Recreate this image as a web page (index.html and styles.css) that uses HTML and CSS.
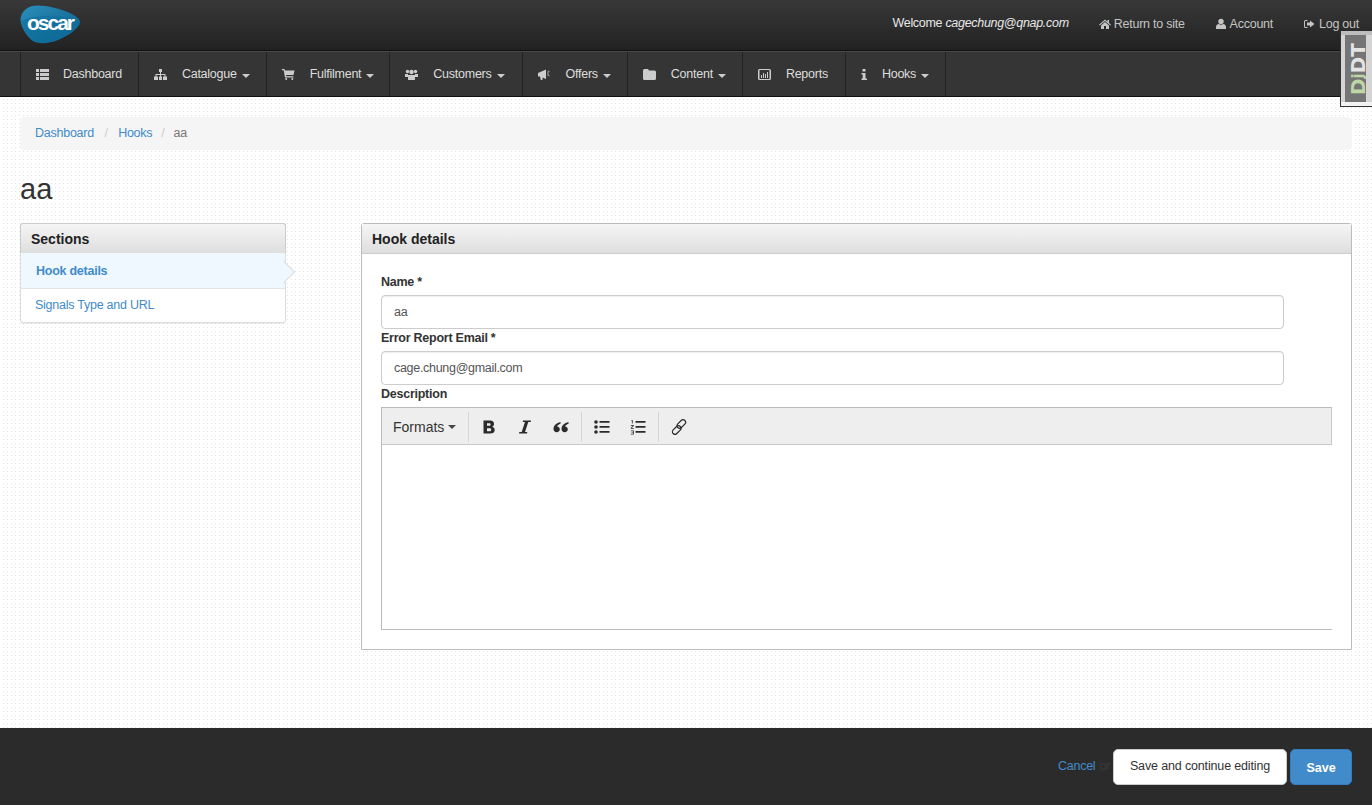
FILE: index.html
```html
<!DOCTYPE html>
<html lang="en">
<head>
<meta charset="utf-8">
<title>aa | Hooks</title>
<link rel="stylesheet" href="styles.css">
</head>
<body>
<header class="topbar">
  <a class="logo" href="#">
    <svg class="logo-shape" width="61" height="39" viewBox="0 0 61 39"><defs><linearGradient id="lg" x1="0" y1="0" x2="1" y2="1"><stop offset="0" stop-color="#2a8fbb"/><stop offset="1" stop-color="#0b5c86"/></linearGradient></defs><path d="M12 1C22-1 38 3 50 8c6 3 10 6 10 9 0 5-10 13-22 18-10 4-20 4-25 1C7 32 2 24 .5 16 0 9 5 3 12 1Z" fill="url(#lg)"/><path d="M1 16C18 9 42 9 60 17c0 5-10 13-22 18-10 4-20 4-25 1C7 32 3 24 1 16Z" fill="#0d6d9b" opacity=".55"/></svg>
    <span class="logo-text">oscar</span>
  </a>
  <div class="user-links">
    <span class="welcome">Welcome <em>cagechung@qnap.com</em></span>
    <a href="#"><svg class="ico-s" viewBox="0 0 12 12"><path d="M6 1.500 0 6.800l.7.8L6 3l5.300 4.600.7-.8-2-1.800V2H8.500v1.700ZM2 7.500V11h3V8h2v3h3V7.500L6 4Z"/></svg>Return to site</a>
    <a href="#"><svg class="ico-s" viewBox="0 0 12 12"><circle cx="6" cy="3.500" r="2.700"/><path d="M1 11V9c0-2 1.500-3 3-3l2 1 2-1c1.500 0 3 1 3 3v2Z"/></svg>Account</a>
    <a href="#"><svg class="ico-s" viewBox="0 0 12 12"><path d="M4.500 2H2.500Q1 2 1 3.500v5Q1 10 2.500 10h2V9h-2q-.5 0-.5-.5v-5q0-.5.5-.5h2Z"/><path d="M7 2.500 11.500 6 7 9.500V7.500H4v-3h3Z"/></svg>Log out</a>
  </div>
</header>
<nav class="navbar">
  <a class="nav-item" href="#"><svg class="ico" viewBox="0 0 13 11"><path d="M0 0h3v3H0zM4 0h9v3H4zM0 4h3v3H0zM4 4h9v3H4zM0 8h3v3H0zM4 8h9v3H4z"/></svg><span class="nav-label">Dashboard</span></a>
  <a class="nav-item" href="#"><svg class="ico" viewBox="0 0 13 11"><path d="M5 0h3v3H7v2h4.500v2.500H13V11H9V7.500h1.500V6H7v1.500h1V11H5V7.500h1V6H2.500v1.500H4V11H0V7.500h1.500V5H6V3H5Z"/></svg><span class="nav-label">Catalogue</span><i class="caret"></i></a>
  <a class="nav-item nav-item-tight" href="#"><svg class="ico" viewBox="0 0 13 11"><path d="M0 0h2.500l.4 1.500H12.500L11.500 6H4l.3 1.200h7.200V8.500H3L1.700 1.300H0Z"/><circle cx="4.200" cy="10" r="1"/><circle cx="10.300" cy="10" r="1"/></svg><span class="nav-label">Fulfilment</span><i class="caret"></i></a>
  <a class="nav-item nav-item-wide" href="#"><svg class="ico" viewBox="0 0 13 11"><circle cx="2.500" cy="2.500" r="1.700"/><circle cx="10.500" cy="2.500" r="1.700"/><circle cx="6.500" cy="3" r="2.200"/><path d="M0 5h3v3H0zM10 5h3v3h-3zM3 6h7v5H3z"/></svg><span class="nav-label">Customers</span><i class="caret"></i></a>
  <a class="nav-item" href="#"><svg class="ico" viewBox="0 0 13 11"><path d="M0 4 8 .5v9.500L4.500 8.500 4.500 11H2.800L2 7.500H0Z"/><path d="M9.500 2.500l2-1v1l-1 .5v3l1 .5v1l-2-1Z" opacity=".75"/></svg><span class="nav-label">Offers</span><i class="caret"></i></a>
  <a class="nav-item" href="#"><svg class="ico" viewBox="0 0 13 11"><path d="M1.500 0H5L6 1.500h5.500Q13 1.500 13 3v6.500Q13 11 11.500 11h-10Q0 11 0 9.500v-8Q0 0 1.500 0Z"/></svg><span class="nav-label">Content</span><i class="caret"></i></a>
  <a class="nav-item nav-item-wide" href="#"><svg class="ico" viewBox="0 0 13 11"><path fill-rule="evenodd" d="M1.500 0h10Q13 0 13 1.500v8q0 1.500-1.500 1.500h-10Q0 11 0 9.500v-8Q0 0 1.500 0ZM1.500 1v9h10V1ZM3 6h1v3H3zM5 4h1v5H5zM7 5h1v4H7zM9 3h1v6H9z"/></svg><span class="nav-label">Reports</span></a>
  <a class="nav-item" href="#"><svg class="ico ico-info" viewBox="0 0 6 11"><path d="M1.500 0h3v2.500h-3zM.5 4h4v5.500H6V11H.5V9.500h1.200V5.500H.5Z"/></svg><span class="nav-label">Hooks</span><i class="caret"></i></a>
</nav>
<aside class="djdt"><span class="dj">D<small>j</small></span>DT</aside>
<main class="content">
  <ol class="breadcrumb">
    <li><a href="#">Dashboard</a></li>
    <li class="sep">/</li>
    <li><a href="#">Hooks</a></li>
    <li class="sep sep-tight">/</li>
    <li class="current">aa</li>
  </ol>
  <h1 class="page-title">aa</h1>
  <div class="columns">
    <section class="sections">
      <h3 class="side-title">Sections</h3>
      <a class="side-link active" href="#">Hook details</a>
      <a class="side-link" href="#">Signals Type and URL</a>
    </section>
    <section class="panel">
      <h3 class="panel-title">Hook details</h3>
      <form class="panel-body">
        <label class="field-label">Name *</label>
        <input class="input" type="text" value="aa">
        <label class="field-label">Error Report Email *</label>
        <input class="input" type="text" value="cage.chung@gmail.com">
        <label class="field-label">Description</label>
        <div class="editor">
          <div class="toolbar">
            <span class="formats">Formats<i class="caret-dark"></i></span>
            <span class="tgroup">
              <svg class="tool" viewBox="0 0 16 16"><path fill="#2b2b2b" fill-rule="evenodd" d="M2.500 1.500h6.500c2.800 0 4 1.500 4 3.400 0 1.400-.8 2.400-2 2.800 1.600.4 2.700 1.500 2.700 3.300 0 2.400-1.800 3.500-4.500 3.500H2.500ZM6 4.200v2.600h2.300c.9 0 1.300-.5 1.300-1.300S9.200 4.200 8.300 4.200ZM6 9.300v3h2.700c1 0 1.500-.6 1.500-1.500s-.5-1.500-1.500-1.500Z"/></svg>
              <svg class="tool" viewBox="0 0 16 16"><path fill="#2b2b2b" d="M6 1.500h8l-.3 1.500h-2.400L8 13h2.300l-.3 1.500H2l.3-1.500h2.400L8 3H5.700Z"/></svg>
              <svg class="tool" viewBox="0 0 16 16"><path fill="#2b2b2b" d="M7.500 3C3.500 4 .5 6.500.5 10c0 2 1.400 3.200 3.200 3.200 1.800 0 3.100-1.200 3.100-2.900S5.600 7.600 4 7.500c.4-1.200 1.800-2.200 3.500-2.800ZM15.500 3c-4 1-7 3.500-7 7 0 2 1.400 3.200 3.200 3.200 1.800 0 3.100-1.200 3.100-2.900s-1.200-2.700-2.800-2.800c.4-1.200 1.800-2.200 3.500-2.800Z"/></svg>
            </span>
            <span class="tgroup">
              <svg class="tool" viewBox="0 0 16 16"><circle cx="2" cy="3" r="1.800" fill="#2b2b2b"/><circle cx="2" cy="8" r="1.800" fill="#2b2b2b"/><circle cx="2" cy="13" r="1.800" fill="#2b2b2b"/><path fill="#2b2b2b" d="M5.500 2h10v1.800h-10zM5.500 7h10v1.800h-10zM5.500 12h10v1.800h-10z"/></svg>
              <svg class="tool" viewBox="0 0 16 16"><path fill="#2b2b2b" d="M5.500 2h10v1.800h-10zM5.500 7h10v1.800h-10zM5.500 12h10v1.800h-10zM1.500 1h1.200v3.500h-.8V2H1.500zM.8 6h3v.7L1.800 9h2v.7h-3V9l2-2.300h-2zM.8 11.500h3v4h-3v-.7h2.200v-1h-1.500v-.6H3v-1H.8z"/></svg>
            </span>
            <span class="tgroup tgroup-last">
              <svg class="tool" viewBox="0 0 16 16"><g fill="none" stroke="#2b2b2b" stroke-width="1.200"><rect x="7.700" y="0" width="5.200" height="10" rx="2.600" transform="rotate(45 10.300 5)"/><rect x="3.100" y="6" width="5.200" height="10" rx="2.600" transform="rotate(45 5.700 11)"/></g></svg>
            </span>
          </div>
          <div class="edit-area"></div>
        </div>
      </form>
    </section>
  </div>
</main>
<footer class="actions">
  <a class="cancel" href="#">Cancel</a><span class="or">or</span>
  <button class="btn btn-white" type="button">Save and continue editing</button>
  <button class="btn btn-blue" type="button">Save</button>
</footer>
</body>
</html>
```
FILE: styles.css
```css
* { box-sizing: border-box; }
html, body { margin: 0; padding: 0; }
body {
  width: 1372px;
  height: 805px;
  overflow: hidden;
  position: relative;
  display: flex;
  flex-direction: column;
  font-family: "Liberation Sans", Arial, sans-serif;
  font-size: 12.500px;
  letter-spacing: -0.25px;
  line-height: 20px;
  color: #333;
  background:
    linear-gradient(90deg, #fff 3px, transparent 3px) 0 0 / 4px 4px,
    linear-gradient(#fff 3px, #e4e4e4 3px) 0 0 / 4px 4px;
}
a { text-decoration: none; color: #428bca; }

.topbar {
  height: 51px;
  flex: none;
  display: flex;
  justify-content: space-between;
  padding: 0 13px 0 20px;
  background: linear-gradient(#383838, #222);
  border-bottom: 1px solid #111;
}
.logo { position: relative; display: block; width: 61px; height: 39px; margin-top: 5px; }
.logo-shape { display: block; }
.logo-text {
  position: absolute;
  left: 7px;
  top: 8px;
  color: #fff;
  font-size: 21px;
  font-weight: bold;
  letter-spacing: -2px;
}
.user-links { display: flex; align-items: flex-start; padding-top: 13px; }
.welcome { color: #e8e8e8; margin-right: 30px; letter-spacing: -0.3px; }
.user-links a { color: #c4c4c4; margin-right: 30px; padding-top: 1px; white-space: nowrap; }
.user-links a:last-child { margin-right: 0; }
.user-links a:last-child .ico-s { margin-right: 4px; }
.ico-s { width: 12px; height: 12px; fill: #c4c4c4; margin-right: 3px; vertical-align: -2px; }

.navbar {
  height: 46px;
  flex: none;
  display: flex;
  padding-left: 20px;
  background: #353535;
  border-top: 1px solid #484848;
  border-bottom: 1px solid #111;
}
.nav-item {
  display: flex;
  align-items: center;
  height: 100%;
  padding: 0 16px 0 15px;
  color: #ddd;
  border-left: 1px solid #222;
  white-space: nowrap;
}
.nav-item-tight { padding-right: 15px; }
.nav-item-wide { padding-right: 17px; }
.nav-item:last-child { border-right: 1px solid #222; }
.ico { width: 13px; height: 11px; fill: #ccc; flex: none; }
.nav-label { margin-left: 15px; }
.nav-item:first-child .nav-label { margin-left: 14px; }
.ico-info { width: 6px; }
.caret {
  margin-left: 5px;
  margin-top: 4px;
  border-top: 4px solid #ccc;
  border-left: 4px solid transparent;
  border-right: 4px solid transparent;
}

.djdt {
  position: absolute;
  top: 31px;
  right: 0;
  width: 32px;
  height: 76px;
  padding-right: 4px;
  background: #757575;
  border: solid #333;
  border-width: 1px 1px 0 0;
  box-shadow: inset 0 4px 0 #f2f2f2, inset 0 -4px 0 #bdbdbd, inset 6px 0 0 #d4d4d4, inset -4px 0 0 #d4d4d4;
  color: #e4e4e4;
  font-family: "DejaVu Sans", sans-serif;
  font-size: 20px;
  font-weight: bold;
  letter-spacing: 0;
  writing-mode: vertical-rl;
  transform: rotate(180deg);
  text-align: center;
  line-height: 26px;
}
.dj { color: #bfd6a6; }
.dj small { font-size: 15px; }

.content { flex: 1; padding: 20px 20px 0; min-height: 0; }
.breadcrumb {
  list-style: none;
  margin: 0;
  height: 33px;
  padding: 6px 15px;
  display: flex;
  background: #f5f5f5;
  border-radius: 4px;
}
.breadcrumb .sep { color: #ccc; padding: 0 10.500px; }
.breadcrumb .sep-tight { padding: 0 9px; }
.breadcrumb .current { color: #777; }
.page-title {
  margin: 23px 0 18px;
  font-size: 29px;
  line-height: 32px;
  font-weight: normal;
  letter-spacing: 0;
  color: #333;
}
.columns { display: flex; justify-content: space-between; align-items: flex-start; }
.sections {
  width: 266px;
  background: #fff;
  border: 1px solid #ddd;
  border-radius: 3px;
  box-shadow: 0 1px 1px rgba(0,0,0,.06);
}
.side-title, .panel-title {
  margin: 0;
  font-size: 14px;
  letter-spacing: 0;
  line-height: 20px;
  font-weight: bold;
  color: #222;
  background: linear-gradient(#f5f5f5, #dedede);
  padding: 5px 10px;
}
.side-title { height: 30px; margin: -1px -1px 0; border: 1px solid #ccc; border-bottom: 0; border-radius: 3px 3px 0 0; }
.side-link { display: block; height: 34px; padding: 6px 14px; border-top: 1px solid #e4e4e4; position: relative; }
.side-link.active {
  height: 35px;
  padding: 8px 15px;
  border-top: 0;
  font-weight: bold;
  background: #eef8fe;
}
.side-link.active::after {
  content: "";
  position: absolute;
  right: -7px;
  top: 11px;
  width: 15px;
  height: 15px;
  background: #eef8fe;
  transform: rotate(45deg);
  border: solid #ddd;
  border-width: 1px 1px 0 0;
}
.panel {
  width: 991px;
  height: 427px;
  background: #fff;
  border: 1px solid #bbb;
  border-radius: 3px 3px 0 0;
}
.panel-title { height: 30px; border-bottom: 1px solid #ccc; }
.panel-body { padding: 19px 19px 0; }
.field-label { display: block; font-weight: bold; line-height: 18px; height: 22px; color: #333; }
.input {
  display: block;
  width: 903px;
  height: 34px;
  padding: 6px 12px;
  border: 1px solid #ccc;
  border-radius: 4px;
  font: 12.500px/20px "Liberation Sans", Arial, sans-serif;
  letter-spacing: -0.3px;
  color: #555;
  background: #fff;
  box-shadow: inset 0 1px 1px rgba(0,0,0,.07);
}
.editor { width: 951px; height: 223px; border: 1px solid #bbb; border-right: 0; }
.toolbar {
  height: 37px;
  display: flex;
  align-items: center;
  padding: 4px 0 2px;
  background: #eee;
  border-bottom: 1px solid #c9c9c9;
  border-right: 1px solid #c9c9c9;
}
.formats { display: flex; align-items: center; width: 87px; height: 100%; padding-left: 11px; font-size: 14px; letter-spacing: 0; color: #333; border-right: 1px solid #d5d5d5; }
.caret-dark { margin-left: 4px; border-top: 4px solid #444; border-left: 4px solid transparent; border-right: 4px solid transparent; }
.tgroup { display: flex; align-items: center; gap: 20px; height: 100%; padding: 0 12px; border-right: 1px solid #d5d5d5; }
.tgroup-last { border-right: 0; }
.tool { width: 16px; height: 16px; display: block; }
.edit-area { height: 184px; background: #fff; }

.actions {
  height: 77px;
  flex: none;
  display: flex;
  align-items: flex-start;
  justify-content: flex-end;
  padding: 21px 20px 0;
  background: #2b2b2b;
}
.cancel { margin-top: 7px; }
.or { margin: 7px 0 0 4px; color: #3a3a3a; }
.btn {
  height: 36px;
  border-radius: 5px;
  font: 12.500px/20px "Liberation Sans", Arial, sans-serif;
  padding: 0;
}
.btn-white { width: 174px; margin-left: 3px; padding-bottom: 2px; background: #fff; border: 1px solid #ccc; color: #333; letter-spacing: -0.15px; }
.btn-blue { width: 62px; margin-left: 3px; padding-top: 1px; background: #428bca; border: 1px solid #357ebd; color: #fff; font-weight: bold; }
```
